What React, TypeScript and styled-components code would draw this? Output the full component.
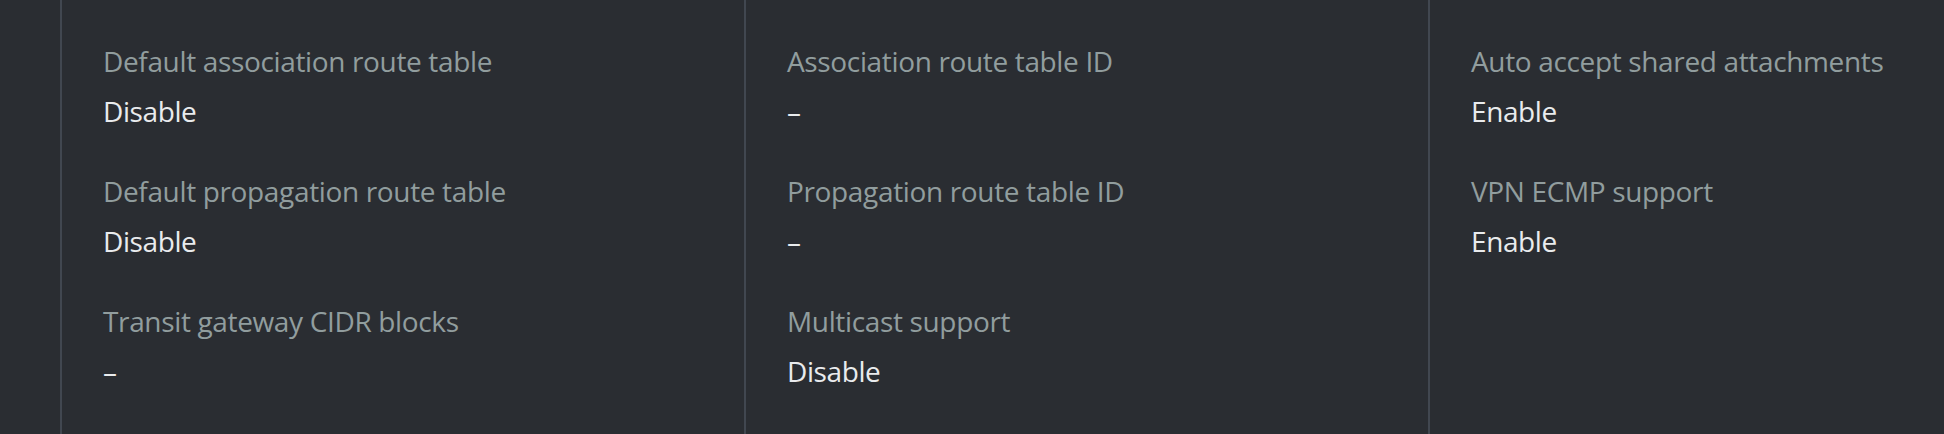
import styled, { createGlobalStyle } from 'styled-components';

const GlobalStyle = createGlobalStyle`
  html, body {
    margin: 0;
    padding: 0;
    background-color: #2a2d32;
    font-family: 'Open Sans', 'Liberation Sans', sans-serif;
    overflow: hidden;
  }
`;

const Panel = styled.div`
  box-sizing: border-box;
  width: 100%;
  height: 434px;
  padding-left: 60px;
  display: grid;
  grid-template-columns: 684px 684px 1fr;
  background-color: #2a2d32;
`;

const Column = styled.div`
  min-width: 0;
  border-left: 2px solid #414750;
  padding: 41px 20px 0 41px;
  display: flex;
  flex-direction: column;
  gap: 40px;
`;

const Item = styled.div`
  display: flex;
  flex-direction: column;
  gap: 10px;
`;

const Label = styled.div`
  font-size: 28px;
  line-height: 40px;
  letter-spacing: -0.35px;
  color: #919d9e;
  white-space: nowrap;
`;

const Value = styled.div<{ $empty?: boolean }>`
  font-size: 28px;
  line-height: 40px;
  letter-spacing: -0.4px;
  color: #e9ebed;
  font-weight: ${(p) => (p.$empty ? 400 : 500)};
`;

interface Field {
  label: string;
  value?: string;
}

const columns: Field[][] = [
  [
    { label: 'Default association route table', value: 'Disable' },
    { label: 'Default propagation route table', value: 'Disable' },
    { label: 'Transit gateway CIDR blocks' },
  ],
  [
    { label: 'Association route table ID' },
    { label: 'Propagation route table ID' },
    { label: 'Multicast support', value: 'Disable' },
  ],
  [
    { label: 'Auto accept shared attachments', value: 'Enable' },
    { label: 'VPN ECMP support', value: 'Enable' },
  ],
];

export default function App() {
  return (
    <>
      <GlobalStyle />
      <Panel>
        {columns.map((fields, i) => (
          <Column key={i}>
            {fields.map((f) => (
              <Item key={f.label}>
                <Label>{f.label}</Label>
                <Value $empty={!f.value}>{f.value ?? '–'}</Value>
              </Item>
            ))}
          </Column>
        ))}
      </Panel>
    </>
  );
}
